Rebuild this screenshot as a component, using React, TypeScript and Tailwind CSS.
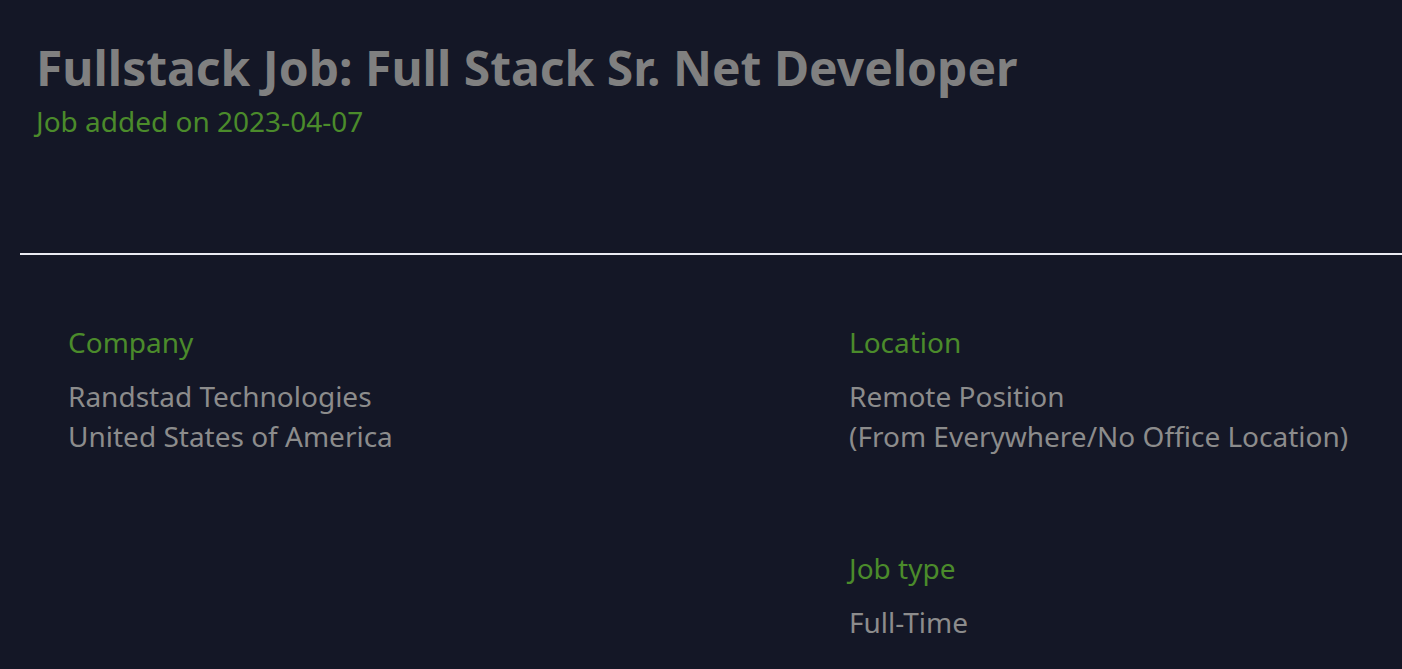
export default function App() {
  return (
    <div className="min-h-screen bg-[#141726] px-5 pt-[36px] font-['Noto_Sans',sans-serif]">
      <div className="px-4">
        <h1 className="text-[48px] font-bold leading-[64px] text-[#808080]">
          Fullstack Job: Full Stack Sr. Net Developer
        </h1>
        <p className="mt-[1px] text-[28px] leading-[40px] text-[#4b8b2b]">Job added on 2023-04-07</p>
      </div>

      <hr className="-mr-5 mt-[112px] border-t-2 border-[#ebebf2]" />

      <div className="grid grid-cols-[781px_1fr] pl-[48px] pt-[67px] text-[28px] leading-[40px]">
        <div>
          <h2 className="text-[#4b8b2b]">Company</h2>
          <div className="mt-[14px] text-[#8c8c8c]">
            <p>Randstad Technologies</p>
            <p>United States of America</p>
          </div>
        </div>
        <div>
          <div>
            <h2 className="text-[#4b8b2b]">Location</h2>
            <div className="mt-[14px] text-[#8c8c8c]">
              <p>Remote Position</p>
              <p>(From Everywhere/No Office Location)</p>
            </div>
          </div>
          <div className="mt-[92px]">
            <h2 className="text-[#4b8b2b]">Job type</h2>
            <p className="mt-[14px] text-[#8c8c8c]">Full-Time</p>
          </div>
        </div>
      </div>
    </div>
  );
}
